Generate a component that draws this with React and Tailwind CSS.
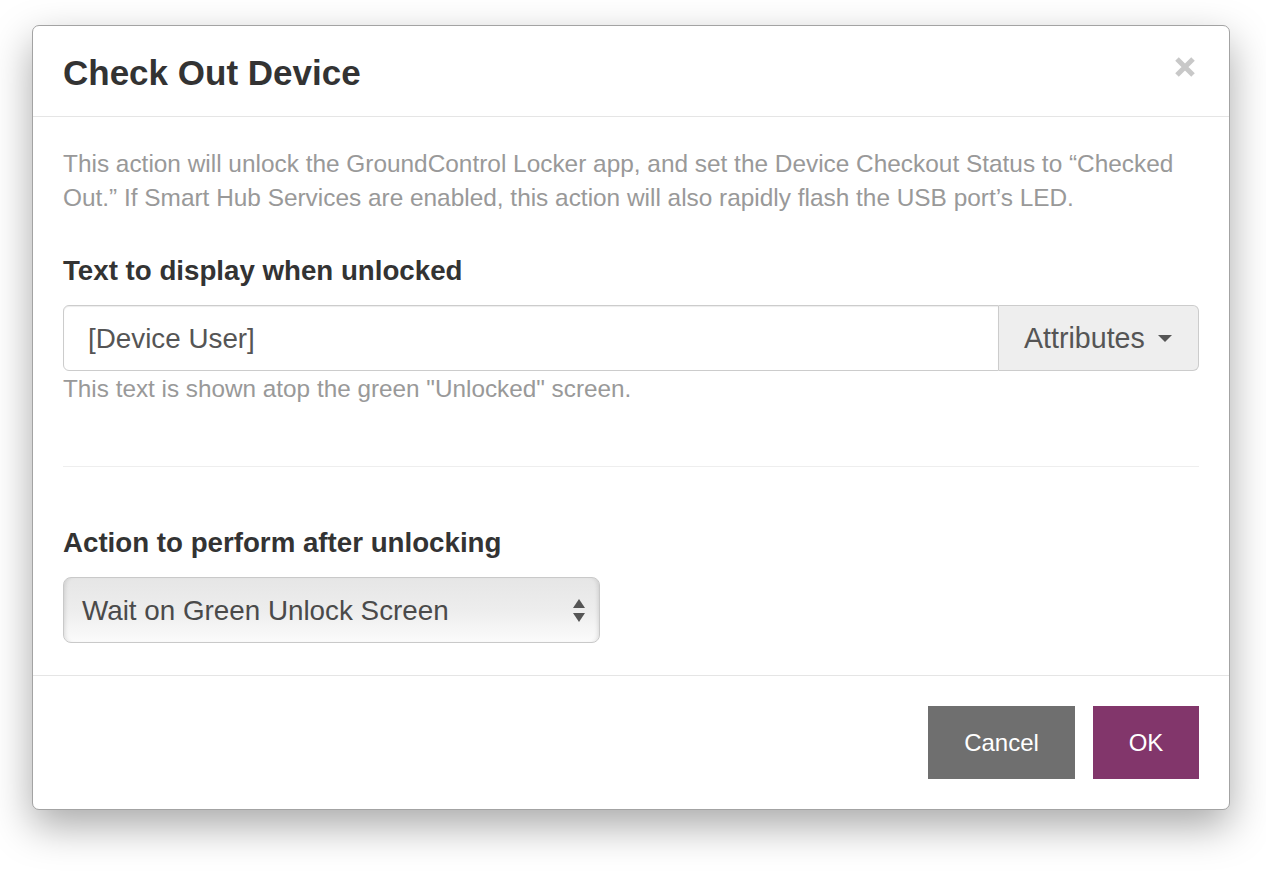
import React from 'react';

// Modal replica: "Check Out Device" dialog on a blank page.
const FONT = { fontFamily: '"Liberation Sans", Arial, Helvetica, sans-serif' };

function CloseIcon() {
  return (
    <svg width="22" height="22" viewBox="0 0 22 22" aria-hidden="true">
      <path d="M3 3 L19 19 M19 3 L3 19" stroke="#c8c8c8" strokeWidth="5" strokeLinecap="butt" />
    </svg>
  );
}

function Caret() {
  return (
    <svg width="14" height="7" viewBox="0 0 14 7" aria-hidden="true">
      <path d="M0 0 H14 L7 7 Z" fill="#555" />
    </svg>
  );
}

function UpDown() {
  return (
    <svg width="12" height="24" viewBox="0 0 12 24" aria-hidden="true">
      <path d="M6 0 L12 9 H0 Z" fill="#555" />
      <path d="M0 14 H12 L6 23 Z" fill="#555" />
    </svg>
  );
}

export default function App() {
  return (
    <div className="min-h-[874px] bg-white pt-[25px] pl-[32px]" style={FONT}>
      <div className="w-[1198px] rounded-[7px] border border-[#a3a3a3] bg-white shadow-[0_16px_40px_rgba(0,0,0,0.34)]">
        <div className="h-[91px] flex items-center justify-between px-[30px] border-b border-[#e5e5e5]">
          <h4 className="mt-[2px] text-[35px] font-bold text-[#333] leading-none">Check Out Device</h4>
          <button type="button" className="-mt-[8px] mr-[3px]" aria-label="Close">
            <CloseIcon />
          </button>
        </div>

        <div className="px-[30px] pt-[30px] pb-[32px]">
          <p className="text-[24.4px] leading-[34px] text-[#999]">
            This action will unlock the GroundControl Locker app, and set the Device Checkout Status to “Checked Out.” If Smart Hub Services are enabled, this action will also rapidly flash the USB port’s LED.
          </p>

          <label className="block mt-[39px] text-[27.7px] leading-[34px] font-bold text-[#333]">
            Text to display when unlocked
          </label>
          <div className="mt-[17px] flex h-[66px]">
            <div className="flex-1 flex items-center pl-[24px] pt-[1px] border border-[#ccc] rounded-l-[6px] text-[27.8px] text-[#555] shadow-[inset_0_1px_1px_rgba(0,0,0,0.075)]">
              [Device User]
            </div>
            <div className="w-[200px] flex items-center gap-[13px] pl-[25px] pt-[1px] border border-l-0 border-[#ccc] rounded-r-[6px] bg-[#eee] text-[28.6px] text-[#555]">
              <span>Attributes</span>
              <Caret />
            </div>
          </div>
          <p className="pt-[1px] text-[24.3px] leading-[34px] text-[#999]">
            This text is shown atop the green "Unlocked" screen.
          </p>

          <hr className="mt-[60px] border-0 border-t border-[#eee]" />

          <label className="block mt-[59px] text-[27.7px] leading-[34px] font-bold text-[#333]">
            Action to perform after unlocking
          </label>
          <div className="mt-[17px] w-[537px] h-[66px] flex items-center justify-between pl-[18px] pr-[14px] pt-[1px] rounded-[8px] border border-[#c9c9c9] bg-gradient-to-b from-[#e6e6e6] via-[#ededed] to-[#fbfbfb] shadow-[inset_4px_0_4px_-3px_rgba(0,0,0,0.12),inset_-4px_0_4px_-3px_rgba(0,0,0,0.12)] text-[27.8px] text-[#4a4a4a]">
            <span>Wait on Green Unlock Screen</span>
            <UpDown />
          </div>
        </div>

        <div className="border-t border-[#e5e5e5] px-[30px] py-[30px] flex justify-end gap-[18px]">
          <button type="button" className="w-[147px] h-[73px] bg-[#6f6f6f] text-white text-[24px]">
            Cancel
          </button>
          <button type="button" className="w-[106px] h-[73px] bg-[#82366b] text-white text-[24px]">
            OK
          </button>
        </div>
      </div>
    </div>
  );
}
